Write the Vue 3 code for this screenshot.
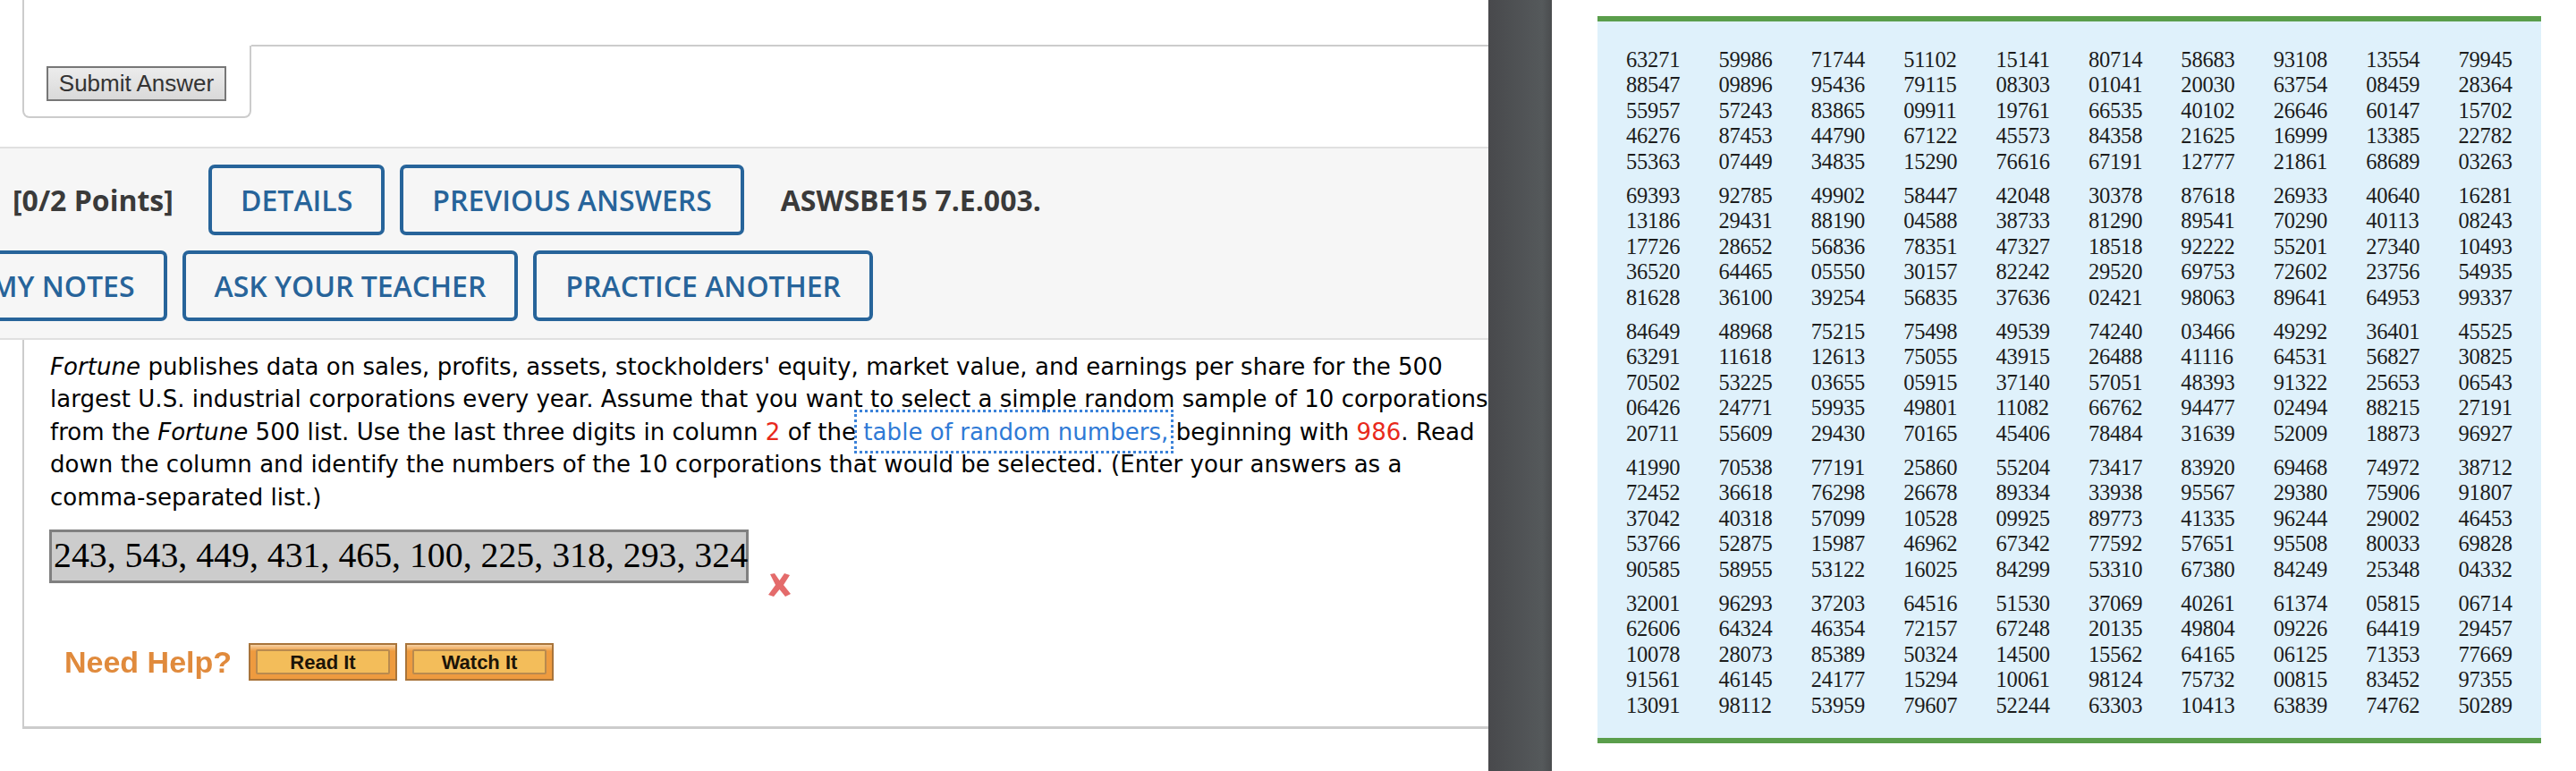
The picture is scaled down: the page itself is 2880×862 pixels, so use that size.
<script setup>
const raw = `63271 59986 71744 51102 15141 80714 58683 93108 13554 79945
88547 09896 95436 79115 08303 01041 20030 63754 08459 28364
55957 57243 83865 09911 19761 66535 40102 26646 60147 15702
46276 87453 44790 67122 45573 84358 21625 16999 13385 22782
55363 07449 34835 15290 76616 67191 12777 21861 68689 03263
69393 92785 49902 58447 42048 30378 87618 26933 40640 16281
13186 29431 88190 04588 38733 81290 89541 70290 40113 08243
17726 28652 56836 78351 47327 18518 92222 55201 27340 10493
36520 64465 05550 30157 82242 29520 69753 72602 23756 54935
81628 36100 39254 56835 37636 02421 98063 89641 64953 99337
84649 48968 75215 75498 49539 74240 03466 49292 36401 45525
63291 11618 12613 75055 43915 26488 41116 64531 56827 30825
70502 53225 03655 05915 37140 57051 48393 91322 25653 06543
06426 24771 59935 49801 11082 66762 94477 02494 88215 27191
20711 55609 29430 70165 45406 78484 31639 52009 18873 96927
41990 70538 77191 25860 55204 73417 83920 69468 74972 38712
72452 36618 76298 26678 89334 33938 95567 29380 75906 91807
37042 40318 57099 10528 09925 89773 41335 96244 29002 46453
53766 52875 15987 46962 67342 77592 57651 95508 80033 69828
90585 58955 53122 16025 84299 53310 67380 84249 25348 04332
32001 96293 37203 64516 51530 37069 40261 61374 05815 06714
62606 64324 46354 72157 67248 20135 49804 09226 64419 29457
10078 28073 85389 50324 14500 15562 64165 06125 71353 77669
91561 46145 24177 15294 10061 98124 75732 00815 83452 97355
13091 98112 53959 79607 52244 63303 10413 63839 74762 50289`

const rows = raw.split('\n').map((r) => r.split(' '))
// five blocks of five rows
const blocks = [0, 5, 10, 15, 20].map((i) => rows.slice(i, i + 5))
</script>

<template>
  <div class="page">
    <div class="left">
      <div class="top">
        <div class="submit-card">
          <button class="submit">Submit Answer</button>
        </div>
        <div class="top-line"></div>
      </div>

      <div class="bar">
        <div class="bar-row first">
          <span class="points">[0/2 Points]</span>
          <a class="btn">DETAILS</a>
          <a class="btn">PREVIOUS ANSWERS</a>
          <span class="code">ASWSBE15 7.E.003.</span>
        </div>
        <div class="bar-row second">
          <a class="btn notes">MY NOTES</a>
          <a class="btn">ASK YOUR TEACHER</a>
          <a class="btn">PRACTICE ANOTHER</a>
        </div>
      </div>

      <div class="question">
        <p class="text">
          <i>Fortune</i> publishes data on sales, profits, assets, stockholders' equity, market value, and earnings per share for the 500<br />
          largest U.S. industrial corporations every year. Assume that you want to select a simple random sample of 10 corporations<br />
          from the <i>Fortune</i> 500 list. Use the last three digits in column <span class="red">2</span> of the <span class="link">table of random numbers,</span> beginning with <span class="red">986</span>. Read<br />
          down the column and identify the numbers of the 10 corporations that would be selected. (Enter your answers as a<br />
          comma-separated list.)
        </p>
        <div class="answer-row">
          <div class="answer">243, 543, 449, 431, 465, 100, 225, 318, 293, 324</div>
          <svg class="cross" width="27" height="26" viewBox="0 0 27 26">
            <path d="M3 1 L8 0 L13.5 8 L19 0 L25 2 L18 13 L26 23 L20 26 L13.5 18 L7 26 L1 24 L9 13 Z" fill="#e46b6b" />
          </svg>
        </div>
        <div class="help">
          <span class="need">Need Help?</span>
          <a class="help-btn read"><span>Read It</span></a>
          <a class="help-btn"><span>Watch It</span></a>
        </div>
      </div>
    </div>

    <div class="divider"></div>

    <div class="right">
      <div class="table">
        <div v-for="(block, b) in blocks" :key="b" class="block">
          <div v-for="(row, r) in block" :key="r" class="row">
            <span v-for="(n, c) in row" :key="c">{{ n }}</span>
          </div>
        </div>
      </div>
    </div>
  </div>
</template>

<style>
html,
body {
  margin: 0;
  background: #fff;
}
</style>

<style scoped>
.page {
  display: flex;
  width: 2880px;
  height: 862px;
  overflow: hidden;
  background: #fff;
}
.left {
  width: 1664px;
  overflow: hidden;
  flex-shrink: 0;
}
.top {
  display: flex;
  height: 164px;
  padding-left: 25px;
  box-sizing: border-box;
}
.submit-card {
  position: relative;
  box-sizing: border-box;
  width: 256px;
  height: 132px;
  border: 2px solid #ccc;
  border-top: 0;
  border-radius: 0 0 8px 8px;
  padding: 74px 0 0 25px;
}
.submit-card::before {
  content: "";
  position: absolute;
  top: 0;
  right: -2px;
  width: 2px;
  height: 51px;
  background: #fff;
}
.submit {
  display: block;
  width: 201px;
  height: 39px;
  padding: 0;
  box-sizing: border-box;
  border: 2px solid #777;
  border-radius: 0;
  background: linear-gradient(#ececec, #d9d9d9);
  font: 26px "Liberation Sans", Arial, sans-serif;
  color: #333;
}
.top-line {
  flex: 1;
  height: 2px;
  margin-top: 50px;
  background: #ccc;
}

.bar {
  height: 216px;
  box-sizing: border-box;
  background: #f6f6f6;
  border-top: 2px solid #e0e0e0;
  border-bottom: 2px solid #e0e0e0;
  padding-top: 18px;
  font-family: "Open Sans", sans-serif;
}
.bar-row {
  display: flex;
  align-items: center;
  height: 79px;
}
.bar-row.first {
  padding-left: 14px;
  margin-bottom: 17px;
}
.points {
  font-size: 32px;
  font-weight: 700;
  color: #3a3a3a;
  width: 219px;
  white-space: nowrap;
}
.code {
  font-size: 32px;
  font-weight: 700;
  color: #3a3a3a;
  margin-left: 24px;
  white-space: nowrap;
}
.btn {
  display: flex;
  align-items: center;
  justify-content: center;
  height: 79px;
  box-sizing: border-box;
  padding: 0 32px;
  border: 4px solid #27649a;
  border-radius: 7px;
  background: #f6f6f6;
  color: #27649a;
  font-size: 32px;
  font-weight: 600;
  white-space: nowrap;
  margin-right: 17px;
}
.notes {
  margin-left: -46px;
}

.question {
  box-sizing: border-box;
  height: 435px;
  margin-left: 25px;
  padding: 12px 0 0 29px;
  border-left: 2px solid #ccc;
  border-bottom: 3px solid #ccc;
}
.text {
  margin: 0;
  font: 26px/36.4px "DejaVu Sans", Verdana, sans-serif;
  letter-spacing: 0.05px;
  color: #000;
  white-space: nowrap;
}
.red {
  color: #e8291c;
}
.link {
  position: relative;
  color: #2f7ad6;
}
.link::after {
  content: "";
  position: absolute;
  top: -10px;
  bottom: -9px;
  left: -10px;
  right: -6px;
  border: 3px dotted #3b82d9;
}
.answer-row {
  display: flex;
  align-items: flex-start;
  margin: 18px 0 0 -1px;
}
.answer {
  box-sizing: border-box;
  width: 782px;
  height: 60px;
  border: 3px solid #808080;
  background: #ccc;
  padding-left: 2px;
  font: 39.8px/52px "Liberation Serif", "Times New Roman", serif;
  color: #000;
  white-space: nowrap;
}
.cross {
  margin: 49px 0 0 21px;
}
.help {
  display: flex;
  align-items: center;
  margin: 52px 0 0 16px;
}
.need {
  font: bold 34px "Liberation Sans", Arial, sans-serif;
  color: #e08a3c;
  width: 206px;
  white-space: nowrap;
  filter: blur(0.6px);
}
.help-btn {
  display: block;
  box-sizing: border-box;
  width: 166px;
  height: 42px;
  padding: 5px 6px;
  border: 2px solid #a8743a;
  background: linear-gradient(#f6d2a6 0, #ee9b3f 7px, #ee9b3f 100%);
}
.help-btn.read {
  margin-right: 9px;
}
.help-btn span {
  display: block;
  height: 28px;
  box-sizing: border-box;
  border: 2px solid #b98a4e;
  border-radius: 2px;
  background: #f3bd5a;
  font: bold 22px/25px "Liberation Sans", Arial, sans-serif;
  color: #1c1408;
  text-align: center;
}

.divider {
  width: 71px;
  flex-shrink: 0;
  background: linear-gradient(90deg, #48494c, #55595b 85%, #4a4c4e);
}
.right {
  flex: 1;
  padding: 18px 0 0 51px;
}
.table {
  box-sizing: border-box;
  width: 1055px;
  height: 813px;
  padding: 28.5px 0 0 32px;
  background: #dff1fb;
  border-top: 6px solid #5a9e4b;
  border-bottom: 6px solid #5a9e4b;
  font: 24.5px/28.5px "Liberation Serif", "Times New Roman", serif;
  letter-spacing: -0.2px;
  color: #1c1c1c;
}
.block {
  margin-bottom: 9.5px;
}
.row {
  display: grid;
  grid-template-columns: repeat(10, 103.4px);
  height: 28.5px;
}
</style>
